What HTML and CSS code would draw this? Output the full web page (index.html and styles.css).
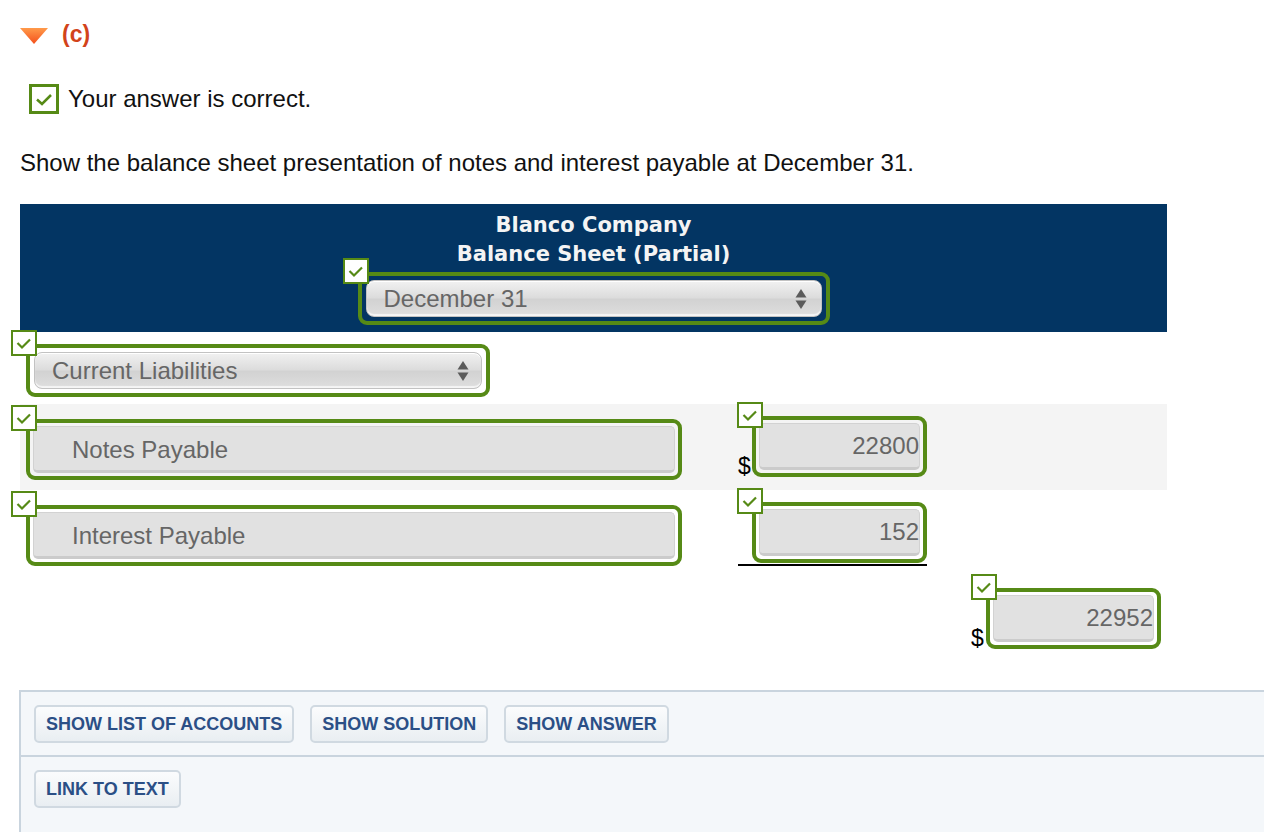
FILE: index.html
```html
<!DOCTYPE html>
<html lang="en">
<head>
<meta charset="utf-8">
<title>Part (c)</title>
<link rel="stylesheet" href="styles.css">
</head>
<body>
<div class="part-head">
  <svg class="tri" width="28" height="18" viewBox="0 0 28 18">
    <defs>
      <linearGradient id="og" x1="0" y1="0" x2="0" y2="1">
        <stop offset="0" stop-color="#ff9a4a"/>
        <stop offset="1" stop-color="#f4501c"/>
      </linearGradient>
    </defs>
    <polygon points="0,1 28,1 14,17" fill="url(#og)"/>
  </svg>
  <span class="part-label">(c)</span>
</div>

<div class="feedback">
  <span class="big-check"><svg width="24" height="24" viewBox="0 0 24 24"><polyline points="5,12.5 10,17 19,8" fill="none" stroke="#568a16" stroke-width="2.5"/></svg></span>
  <span class="feedback-text">Your answer is correct.</span>
</div>

<p class="question">Show the balance sheet presentation of notes and interest payable at December 31.</p>

<div class="sheet">
  <div class="sheet-head">
    <div class="title">Blanco Company</div>
    <div class="title">Balance Sheet (Partial)</div>
    <div class="ok-wrap select-wrap date-wrap">
      <span class="mini-check"><svg width="22" height="22" viewBox="0 0 22 22"><polyline points="4.5,11 9,15.5 17,7.5" fill="none" stroke="#568a16" stroke-width="2.2"/></svg></span>
      <div class="select">
        <span>December 31</span>
        <svg class="arrows" width="12" height="22" viewBox="0 0 12 22"><polygon points="6,1 11.5,9.5 0.5,9.5" fill="#5b5b5b"/><polygon points="0.5,12.5 11.5,12.5 6,21" fill="#5b5b5b"/></svg>
      </div>
    </div>
  </div>

  <div class="cl-row">
    <div class="ok-wrap select-wrap cl-wrap">
      <span class="mini-check"><svg width="22" height="22" viewBox="0 0 22 22"><polyline points="4.5,11 9,15.5 17,7.5" fill="none" stroke="#568a16" stroke-width="2.2"/></svg></span>
      <div class="select">
        <span>Current Liabilities</span>
        <svg class="arrows" width="12" height="22" viewBox="0 0 12 22"><polygon points="6,1 11.5,9.5 0.5,9.5" fill="#5b5b5b"/><polygon points="0.5,12.5 11.5,12.5 6,21" fill="#5b5b5b"/></svg>
      </div>
    </div>
  </div>

  <div class="line line-shaded">
    <div class="ok-wrap label-cell">
      <span class="mini-check"><svg width="22" height="22" viewBox="0 0 22 22"><polyline points="4.5,11 9,15.5 17,7.5" fill="none" stroke="#568a16" stroke-width="2.2"/></svg></span>
      <div class="field">Notes Payable</div>
    </div>
    <div class="amount-group">
      <span class="dollar">$</span>
      <div class="ok-wrap amount">
        <span class="mini-check"><svg width="22" height="22" viewBox="0 0 22 22"><polyline points="4.5,11 9,15.5 17,7.5" fill="none" stroke="#568a16" stroke-width="2.2"/></svg></span>
        <div class="field num">22800</div>
      </div>
    </div>
  </div>

  <div class="line">
    <div class="ok-wrap label-cell">
      <span class="mini-check"><svg width="22" height="22" viewBox="0 0 22 22"><polyline points="4.5,11 9,15.5 17,7.5" fill="none" stroke="#568a16" stroke-width="2.2"/></svg></span>
      <div class="field">Interest Payable</div>
    </div>
    <div class="amount-group underlined">
      <span class="dollar"></span>
      <div class="ok-wrap amount">
        <span class="mini-check"><svg width="22" height="22" viewBox="0 0 22 22"><polyline points="4.5,11 9,15.5 17,7.5" fill="none" stroke="#568a16" stroke-width="2.2"/></svg></span>
        <div class="field num">152</div>
      </div>
    </div>
  </div>

  <div class="line line-total">
    <div class="total-group">
      <span class="dollar">$</span>
      <div class="ok-wrap amount">
        <span class="mini-check"><svg width="22" height="22" viewBox="0 0 22 22"><polyline points="4.5,11 9,15.5 17,7.5" fill="none" stroke="#568a16" stroke-width="2.2"/></svg></span>
        <div class="field num">22952</div>
      </div>
    </div>
  </div>
</div>

<div class="panel">
  <div class="panel-row">
    <button class="btn">SHOW LIST OF ACCOUNTS</button>
    <button class="btn">SHOW SOLUTION</button>
    <button class="btn">SHOW ANSWER</button>
  </div>
  <div class="panel-row second">
    <button class="btn">LINK TO TEXT</button>
  </div>
</div>
</body>
</html>
```

FILE: styles.css
```css
html, body {
  margin: 0;
  padding: 0;
  background: #fff;
}
body {
  font-family: "Liberation Sans", Arial, Helvetica, sans-serif;
  color: #111;
  width: 1264px;
  overflow: hidden;
}

.part-head {
  display: flex;
  align-items: center;
  gap: 14px;
  padding: 20px 0 0 20px;
  height: 28px;
}
.tri { display: block; margin-top: 3px; }
.part-label {
  font-weight: bold;
  font-size: 23px;
  color: #d2431a;
  line-height: 26px;
}

.feedback {
  display: flex;
  align-items: center;
  gap: 9px;
  margin-top: 36px;
  padding-left: 29px;
}
.big-check {
  width: 30px;
  height: 30px;
  box-sizing: border-box;
  border: 3px solid #568a16;
  background: #fff;
  display: flex;
  align-items: center;
  justify-content: center;
}
.feedback-text {
  font-size: 24px;
  line-height: 30px;
}

.question {
  margin: 35px 0 0 20px;
  font-size: 24px;
  line-height: 28px;
  height: 28px;
}

.sheet {
  margin: 27px 0 0 20px;
  width: 1147px;
}
.sheet-head {
  background: #033563;
  height: 128px;
  box-sizing: border-box;
  padding-top: 7px;
  text-align: center;
  color: #f4f4f4;
}
.title {
  font-family: "DejaVu Sans", Verdana, sans-serif;
  font-weight: bold;
  font-size: 21px;
  line-height: 29px;
}

.ok-wrap {
  position: relative;
  box-sizing: border-box;
  border: 4px solid #568a16;
  border-radius: 9px;
  padding: 3px;
}
.mini-check {
  position: absolute;
  left: -19px;
  top: -18px;
  width: 26px;
  height: 26px;
  box-sizing: border-box;
  border: 2px solid #568a16;
  background: #fff;
  display: flex;
  align-items: center;
  justify-content: center;
  z-index: 2;
}

.select-wrap { height: 53px; padding: 4px; }
.date-wrap {
  width: 472px;
  margin: 3px auto 0;
  text-align: left;
}
.select {
  height: 37px;
  box-sizing: border-box;
  border: 1px solid #c2c2c2;
  border-radius: 8px;
  background: linear-gradient(#f1f1f1 0%, #dcdcdc 48%, #d2d2d2 52%, #dedede 100%);
  box-shadow: inset 0 1px 0 #fff, inset 0 -2px 1px rgba(255,255,255,0.7);
  display: flex;
  align-items: center;
  justify-content: space-between;
  padding: 0 14px 0 17px;
  font-size: 24px;
  color: #666;
}
.arrows { display: block; }

.cl-row {
  height: 72px;
  box-sizing: border-box;
  padding: 12px 0 0 6px;
}
.cl-wrap { width: 464px; }
.cl-wrap .select { padding-left: 17px; padding-right: 12px; }

.line {
  display: grid;
  grid-template-columns: 6px 656px 56px 189px 44px 190px 1fr;
  align-items: start;
  height: 84px;
  box-sizing: border-box;
  padding-top: 15px;
}
.line-shaded {
  background: #f4f4f4;
  height: 86px;
}
.label-cell {
  grid-column: 2;
  height: 61px;
}
.field {
  height: 47px;
  box-sizing: border-box;
  background: #e1e1e1;
  border: 1px solid #d2d2d2;
  border-bottom: 3px solid #cbcbcb;
  border-radius: 5px;
  display: flex;
  align-items: center;
  padding: 2px 0 0 38px;
  font-size: 24px;
  color: #666;
}
.amount-group {
  grid-column: 4;
  display: flex;
  align-items: flex-end;
  margin-top: -3px;
}
.underlined {
  border-bottom: 2px solid #000;
  padding-bottom: 1px;
}
.dollar {
  width: 14px;
  flex: none;
  font-size: 23px;
  line-height: 22px;
  color: #000;
}
.amount {
  width: 175px;
  height: 61px;
  flex: none;
}
.amount .field.num {
  justify-content: flex-end;
  padding: 0 0 0 0;
}
.line-total {
  padding-top: 14px;
  height: 116px;
}
.total-group {
  grid-column: 6;
  display: flex;
  align-items: flex-end;
}
.total-group .dollar { width: 15px; }

.panel {
  margin-left: 19px;
  background: #f4f7fa;
  border-top: 2px solid #c9d4de;
  border-left: 2px solid #c9d4de;
  height: 142px;
}
.panel-row {
  display: flex;
  gap: 16px;
  padding: 13px 13px 12px;
  border-bottom: 2px solid #c9d4de;
}
.panel-row.second {
  border-bottom: none;
  padding-top: 13px;
}
.btn {
  height: 38px;
  box-sizing: border-box;
  padding: 0 10px;
  border: 2px solid #d0d9e1;
  border-radius: 5px;
  background: linear-gradient(#fbfcfd, #e9eef2);
  font-family: "Liberation Sans", Arial, sans-serif;
  font-weight: bold;
  font-size: 18px;
  color: #2b4f86;
  cursor: pointer;
}
```
